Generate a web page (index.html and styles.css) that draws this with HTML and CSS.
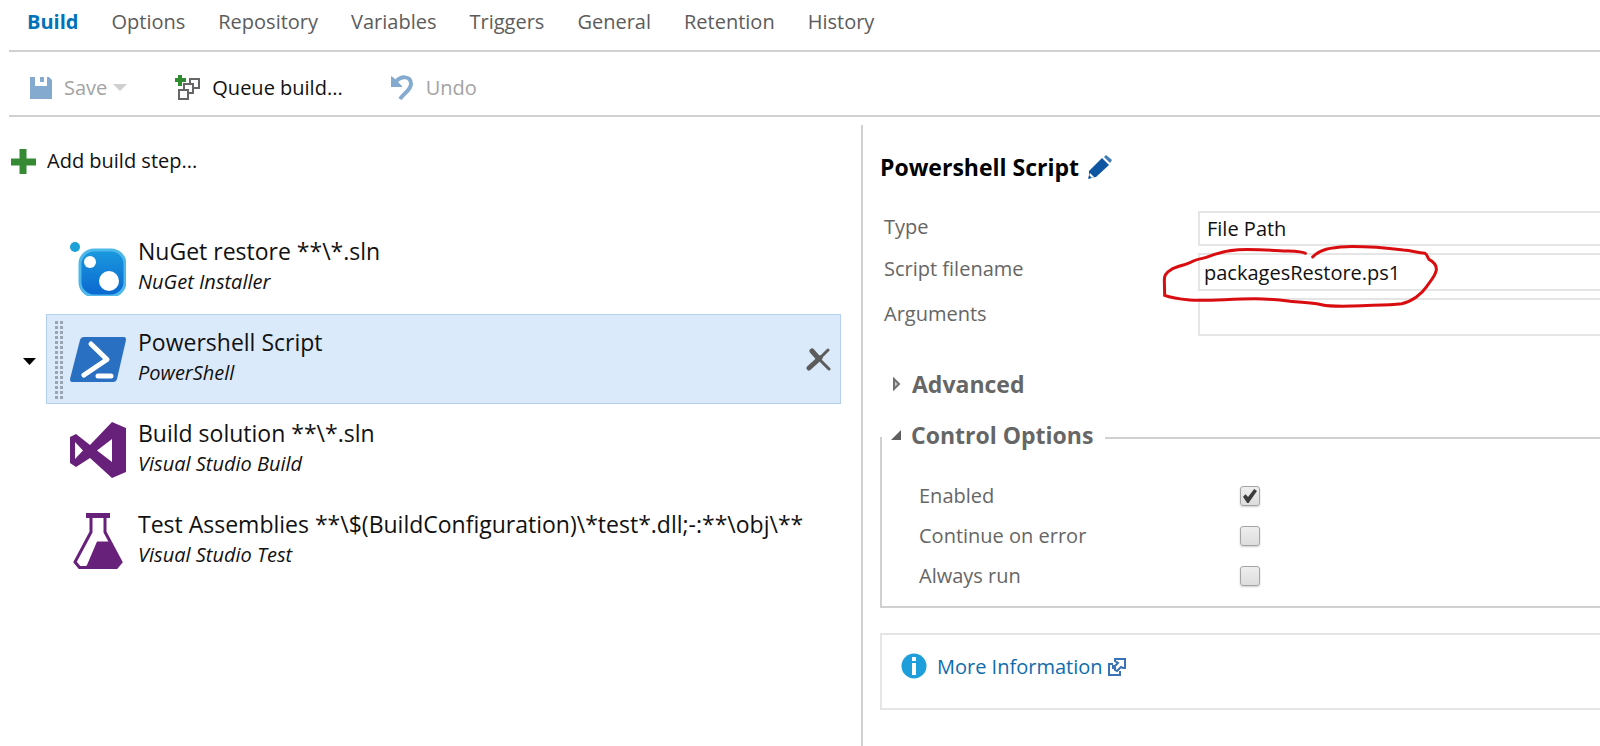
FILE: index.html
```
<!DOCTYPE html>
<html lang="en">
<head>
  <meta charset="UTF-8" />
  <title>Build Definition</title>
  <link rel="stylesheet" href="styles.css">
</head>
<body>

  <nav class="tabs">
    <a href="#" class="active">Build</a>
    <a href="#">Options</a>
    <a href="#">Repository</a>
    <a href="#">Variables</a>
    <a href="#">Triggers</a>
    <a href="#">General</a>
    <a href="#">Retention</a>
    <a href="#">History</a>
  </nav>

  <div class="toolbar">
    <button class="save" disabled>
      <svg width="22" height="22" viewBox="0 0 22 22">
        <path fill="#84aacf" d="M0 0h5v9h12V0h2l3 3v19H0z" />
        <path fill="#84aacf" d="M10 0h4v5h-4z" />
      </svg>
      <span>Save</span>
      <svg class="caret" width="14" height="7" viewBox="0 0 14 7"><path fill="#cfcfcf" d="M0 0h14L7 7z" /></svg>
    </button>
    <button class="queue">
      <svg width="25" height="25" viewBox="0 0 25 25">
        <g fill="#fff" stroke="#666" stroke-width="2">
          <path d="M15 4h9v9h-9z" />
          <path d="M9 9h9v9H9z" />
          <path d="M4 15h9v9H4z" />
        </g>
        <path stroke="#2e8b2e" stroke-width="4" d="M5 0v11M0 5h11" />
      </svg>
      <span>Queue build...</span>
    </button>
    <button class="undo" disabled>
      <svg width="23" height="25" viewBox="0 0 23 25">
        <path fill="none" stroke="#84aacf" stroke-width="4" d="M5 7C9 1 20 0 20 9c0 6-7 9-11 15" />
        <path fill="#84aacf" d="M0 1l3 2 8 8v1H0z" />
      </svg>
      <span>Undo</span>
    </button>
  </div>

  <main>
    <section class="steps">
      <button class="add-step">
        <svg width="25" height="25" viewBox="0 0 25 25"><path stroke="#368a34" stroke-width="7" d="M12 0v25M0 13h25" /></svg>
        <span>Add build step...</span>
      </button>

      <div class="step">
        <svg class="icon" viewBox="0 0 56 56">
          <defs>
            <linearGradient id="nuget" x1="0" y1="0" x2="0" y2="1">
              <stop offset="0" stop-color="#1b9ade" />
              <stop offset="1" stop-color="#0a66cf" />
            </linearGradient>
          </defs>
          <circle cx="5" cy="7" r="5" fill="#1ba0d8" />
          <rect x="10" y="10" width="45" height="46" rx="14" fill="url(#nuget)" stroke="#4fb8ea" stroke-width="3" />
          <circle cx="20" cy="22" r="6" fill="#fff" />
          <circle cx="39" cy="41" r="10" fill="#fff" />
        </svg>
        <div class="text">
          <div class="name">NuGet restore **\*.sln</div>
          <div class="task">NuGet Installer</div>
        </div>
      </div>

      <div class="step selected">
        <svg class="pointer" width="13" height="7" viewBox="0 0 13 7"><path d="M0 0h13L6.500 7z" /></svg>
        <span class="grip"></span>
        <svg class="icon" viewBox="0 0 56 56">
          <path fill="#2a70c2" d="M14 6h40q2 0 2 3L47 48q-1 3-4 3H2q-2 0-2-3L10 9q1-3 4-3z" />
          <path fill="none" stroke="#fff" stroke-width="5" stroke-linecap="round" stroke-linejoin="round" d="M21 13l16 15.500L14 44M28 45h13" />
        </svg>
        <div class="text">
          <div class="name">Powershell Script</div>
          <div class="task">PowerShell</div>
        </div>
        <button class="remove" aria-label="Remove step">
          <svg width="25" height="23" viewBox="0 0 25 23">
            <g fill="none" stroke="#5c5c5c" stroke-linecap="round">
              <path stroke-width="5" d="M6 3l7 8M3 20l11-10" />
              <path stroke-width="3" d="M12 10l11 11M13 11l9-9" />
            </g>
          </svg>
        </button>
      </div>

      <div class="step">
        <svg class="icon" viewBox="0 0 56 56">
          <path fill="#68217a" fill-rule="evenodd" d="M42 0l14 6v44l-14 6-22-20L6 45l-6-4V15l6-3 14 11zM5 20v17l8-8.500zM42 17L27 28.500 42 40z" />
        </svg>
        <div class="text">
          <div class="name">Build solution **\*.sln</div>
          <div class="task">Visual Studio Build</div>
        </div>
      </div>

      <div class="step">
        <svg class="icon" viewBox="0 0 56 56">
          <path fill="#68217a" d="M16 0h24v5H16zM27 28.500h13L51 49l-5 6H14l3-3z" />
          <path fill="none" stroke="#68217a" stroke-width="3" d="M21 4v15L5 49l4.500 5.500h37L51 49 35 19V4" />
        </svg>
        <div class="text">
          <div class="name">Test Assemblies **\$(BuildConfiguration)\*test*.dll;-:**\obj\**</div>
          <div class="task">Visual Studio Test</div>
        </div>
      </div>
    </section>

    <section class="details">
      <h1>
        Powershell Script
        <svg width="24" height="24" viewBox="0 0 24 24">
          <path fill="#0d55a0" d="M1 16L14 3l7 7L8 22l-7 1z" />
          <path fill="#3f79b8" d="M16 2l2-2 6 5-2 3z" />
          <path fill="#fff" d="M2 18l4 4-3 1-2-2z" />
          <path fill="#0d55a0" d="M1 20l3 3-4 1z" />
        </svg>
      </h1>

      <div class="field">
        <label for="type">Type</label>
        <select id="type"><option>File Path</option></select>
      </div>
      <div class="field">
        <label for="filename">Script filename</label>
        <div class="marked">
          <input type="text" id="filename" value="packagesRestore.ps1" />
          <svg class="mark" width="285" height="70" viewBox="60 150 855 210">
            <path d="M496 190C485 183 450 184 420 182C370 179 330 178 295 179C250 182 225 192 205 200C190 207 175 205 160 213C140 225 110 228 95 238C75 250 73 258 73 270L74 316C95 324 120 327 150 330C200 334 260 327 345 326C390 326 420 330 450 334C500 337 520 338 545 344C570 350 600 349 640 348C690 345 740 346 785 341C815 335 845 312 860 290C868 275 885 262 889 240C890 222 880 215 868 209C860 200 862 193 855 190C830 188 815 181 790 180C740 174 680 169 620 170C570 172 540 178 518 201" />
          </svg>
        </div>
      </div>
      <div class="field">
        <label for="arguments">Arguments</label>
        <input type="text" id="arguments" />
      </div>

      <h2 class="group">
        <svg width="10" height="14" viewBox="0 0 10 14"><path fill="#ccc" stroke="#707070" stroke-width="2" d="M2 2v10l5-5z" /></svg>
        Advanced
      </h2>

      <fieldset>
        <legend class="group">
          <svg width="10" height="10" viewBox="0 0 10 10"><path fill="#606060" d="M10 0v10H0z" /></svg>
          Control Options
        </legend>
        <div class="option">
          <label for="enabled">Enabled</label>
          <input type="checkbox" id="enabled" checked />
        </div>
        <div class="option">
          <label for="continue">Continue on error</label>
          <input type="checkbox" id="continue" />
        </div>
        <div class="option">
          <label for="always">Always run</label>
          <input type="checkbox" id="always" />
        </div>
      </fieldset>

      <div class="info">
        <svg width="26" height="26" viewBox="0 0 26 26">
          <circle cx="13" cy="13" r="12.500" fill="#1e9fdc" />
          <path fill="#fff" d="M11 4h4v4h-4zM11 10h4v12h-4z" />
        </svg>
        <a href="#">More Information
          <svg width="18" height="18" viewBox="0 0 18 18">
            <path fill="none" stroke="#3a72b5" stroke-width="2" d="M5 6H1v11h11v-4M7 1h10v9h-2l-2-1-4 4-2-1v-2H5V8h2l3-3-3-2z" />
          </svg>
        </a>
      </div>
    </section>
  </main>

</body>
</html>
```
FILE: styles.css
```
body {
  font-family: "Open Sans", "Noto Sans", sans-serif;
  font-size: 20px;
  line-height: 28px;
  color: #111;
  background: #fff;
  margin: 0;
  padding-left: 9px;
  min-height: 100vh;
  box-sizing: border-box;
  display: flex;
  flex-direction: column;
  overflow-x: hidden;
}

a {
  text-decoration: none;
}

button {
  display: flex;
  align-items: center;
  padding: 0;
  border: none;
  background: none;
  font: inherit;
  color: inherit;
  cursor: pointer;
}

.tabs {
  display: flex;
  gap: 33px;
  padding: 8px 18px 14px;
  border-bottom: 2px solid #d0d0d0;
}

.tabs a {
  color: #5c5c5c;
}

.tabs .active {
  color: #0072b8;
  font-weight: bold;
}

.toolbar {
  display: flex;
  align-items: center;
  gap: 48px;
  height: 65px;
  padding: 8px 21px 0;
  box-sizing: border-box;
  border-bottom: 2px solid #d0d0d0;
}

.toolbar button {
  gap: 12px;
}

.toolbar button:disabled {
  color: #a3a3a3;
}

.toolbar .caret {
  margin-left: -6px;
}

main {
  flex: 1;
  display: grid;
  grid-template-columns: minmax(0, 852fr) minmax(0, 739fr);
  margin-top: 8px;
}

.steps {
  padding: 22px 20px 0 0;
}

.add-step {
  gap: 11px;
  margin: 0 0 48px 2px;
}

.step {
  position: relative;
  display: flex;
  align-items: center;
  height: 90px;
  margin: 0 0 1px 37px;
  padding-left: 23px;
  box-sizing: border-box;
  border: 1px solid transparent;
}

.step.selected {
  background: #dbeafa;
  border: 1px solid #b5d0ee;
}

.step .icon {
  flex: none;
  width: 56px;
  height: 56px;
  margin-right: 12px;
}

.step .text {
  padding-bottom: 6px;
}

.step .name {
  font-size: 23px;
  line-height: 34px;
  white-space: nowrap;
}

.step .task {
  font-style: italic;
}

.pointer {
  position: absolute;
  left: -24px;
  top: 43px;
}

/* two columns of dots */
.grip {
  position: absolute;
  left: 7px;
  top: 5px;
  width: 10px;
  height: 80px;
  background: radial-gradient(circle, #9aa5b1 2px, transparent 2px) 0 0 / 5px 5px;
}

.remove {
  margin: 0 9px 0 auto;
}

.details {
  border-left: 2px solid #d0d0d0;
  padding: 24px 0 36px 17px;
}

h1 {
  display: flex;
  align-items: center;
  gap: 9px;
  margin: 0 0 26px;
  font-size: 23px;
  line-height: 36px;
  color: #000;
}

.field {
  display: grid;
  grid-template-columns: 314px 1fr;
  padding-left: 4px;
  margin-bottom: 7px;
  color: #666;
}

.field label {
  padding-top: 2px;
}

.field input,
.field select {
  width: 100%;
  height: 38px;
  padding: 0 4px;
  box-sizing: border-box;
  border: 2px solid #e5e5e5;
  border-right: none;
  border-radius: 0;
  background: #fff;
  font: inherit;
  color: #111;
  appearance: none;
}

.field select {
  height: 35px;
  padding: 0 7px;
}

.marked {
  position: relative;
}

/* hand-drawn ring around the file name */
.mark {
  position: absolute;
  left: -38px;
  top: -13px;
  pointer-events: none;
}

.mark path {
  fill: none;
  stroke: #d90d10;
  stroke-width: 9;
  stroke-linecap: round;
}

.group {
  display: flex;
  align-items: center;
  gap: 10px;
  margin: 0;
  font-size: 23px;
  font-weight: bold;
  line-height: 34px;
  color: #666;
}

h2.group {
  margin: 31px 0 17px 12px;
}

fieldset {
  margin: 0 0 25px;
  padding: 18px 0 10px;
  border: 2px solid #d0d0d0;
  border-right: none;
}

fieldset legend {
  margin-left: 3px;
  padding: 0 12px 6px 9px;
}

.option {
  display: grid;
  grid-template-columns: 321px auto;
  align-items: center;
  justify-content: start;
  height: 40px;
  padding-left: 37px;
  color: #666;
}

.option input {
  width: 20px;
  height: 20px;
  margin: 0;
  border: 1px solid #a5a5a5;
  border-radius: 3px;
  background: linear-gradient(#eee, #ddd);
  box-shadow: 0 1px 2px #ccc;
  appearance: none;
}

.option input:checked {
  display: grid;
  place-items: center;
}

.option input:checked::before {
  content: "";
  width: 14px;
  height: 14px;
  background: #3c3c3c;
  clip-path: polygon(0 55%, 18% 38%, 36% 58%, 80% 0, 100% 15%, 40% 100%, 30% 100%);
}

.info {
  display: flex;
  align-items: flex-start;
  gap: 10px;
  padding: 18px 0 27px 19px;
  border: 2px solid #e5e5e5;
  border-right: none;
}

.info a {
  display: flex;
  align-items: center;
  gap: 5px;
  color: #0e6cad;
}
```
